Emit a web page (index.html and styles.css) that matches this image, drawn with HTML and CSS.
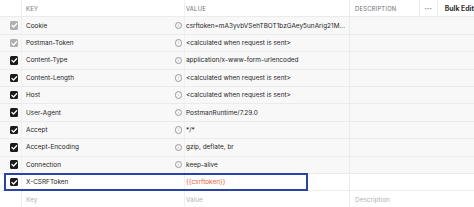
FILE: index.html
```html
<!DOCTYPE html>
<html>
<head>
<meta charset="utf-8">
<link rel="stylesheet" href="styles.css">
</head>
<body>
<div class="table">
  <div class="row head">
    <div class="cell check"></div>
    <div class="cell key">KEY</div>
    <div class="cell value">VALUE</div>
    <div class="cell desc">
      <span class="desc-label">DESCRIPTION</span>
      <span class="dots">•••</span>
      <span class="bulk">Bulk Edit</span>
    </div>
  </div>

  <div class="row grey">
    <div class="cell check"><span class="box off"><svg viewBox="0 0 10 10"><path d="M2.3 5.2 L4.2 7 L7.8 3.2" /></svg></span></div>
    <div class="cell key">Cookie<span class="info">i</span></div>
    <div class="cell value">csrftoken=mA3yvbVSehTBOT1bzGAey5unArig21M...</div>
    <div class="cell desc"></div>
  </div>
  <div class="row grey">
    <div class="cell check"><span class="box off"><svg viewBox="0 0 10 10"><path d="M2.3 5.2 L4.2 7 L7.8 3.2" /></svg></span></div>
    <div class="cell key">Postman-Token<span class="info">i</span></div>
    <div class="cell value">&lt;calculated when request is sent&gt;</div>
    <div class="cell desc"></div>
  </div>
  <div class="row grey">
    <div class="cell check"><span class="box"><svg viewBox="0 0 10 10"><path d="M2.3 5.2 L4.2 7 L7.8 3.2" /></svg></span></div>
    <div class="cell key">Content-Type<span class="info">i</span></div>
    <div class="cell value">application/x-www-form-urlencoded</div>
    <div class="cell desc"></div>
  </div>
  <div class="row grey">
    <div class="cell check"><span class="box"><svg viewBox="0 0 10 10"><path d="M2.3 5.2 L4.2 7 L7.8 3.2" /></svg></span></div>
    <div class="cell key">Content-Length<span class="info">i</span></div>
    <div class="cell value">&lt;calculated when request is sent&gt;</div>
    <div class="cell desc"></div>
  </div>
  <div class="row grey">
    <div class="cell check"><span class="box"><svg viewBox="0 0 10 10"><path d="M2.3 5.2 L4.2 7 L7.8 3.2" /></svg></span></div>
    <div class="cell key">Host<span class="info">i</span></div>
    <div class="cell value">&lt;calculated when request is sent&gt;</div>
    <div class="cell desc"></div>
  </div>
  <div class="row grey">
    <div class="cell check"><span class="box"><svg viewBox="0 0 10 10"><path d="M2.3 5.2 L4.2 7 L7.8 3.2" /></svg></span></div>
    <div class="cell key">User-Agent<span class="info">i</span></div>
    <div class="cell value">PostmanRuntime/7.29.0</div>
    <div class="cell desc"></div>
  </div>
  <div class="row grey">
    <div class="cell check"><span class="box"><svg viewBox="0 0 10 10"><path d="M2.3 5.2 L4.2 7 L7.8 3.2" /></svg></span></div>
    <div class="cell key">Accept<span class="info">i</span></div>
    <div class="cell value">*/*</div>
    <div class="cell desc"></div>
  </div>
  <div class="row grey">
    <div class="cell check"><span class="box"><svg viewBox="0 0 10 10"><path d="M2.3 5.2 L4.2 7 L7.8 3.2" /></svg></span></div>
    <div class="cell key">Accept-Encoding<span class="info">i</span></div>
    <div class="cell value">gzip, deflate, br</div>
    <div class="cell desc"></div>
  </div>
  <div class="row grey">
    <div class="cell check"><span class="box"><svg viewBox="0 0 10 10"><path d="M2.3 5.2 L4.2 7 L7.8 3.2" /></svg></span></div>
    <div class="cell key">Connection<span class="info">i</span></div>
    <div class="cell value">keep-alive</div>
    <div class="cell desc"></div>
  </div>
  <div class="row selected">
    <div class="cell check"><span class="box"><svg viewBox="0 0 10 10"><path d="M2.3 5.2 L4.2 7 L7.8 3.2" /></svg></span></div>
    <div class="cell key">X-CSRFToken</div>
    <div class="cell value var">{{csrftoken}}</div>
    <div class="cell desc"></div>
    <div class="highlight"></div>
  </div>
  <div class="row empty">
    <div class="cell check"></div>
    <div class="cell key placeholder">Key</div>
    <div class="cell value placeholder">Value</div>
    <div class="cell desc placeholder">Description</div>
  </div>
</div>
</body>
</html>
```

FILE: styles.css
```css
html, body {
  margin: 0;
  padding: 0;
  background: #ffffff;
}

body {
  font-family: Inter, "Noto Sans", sans-serif;
  font-size: 6.45px;
  color: #262626;
  width: 474px;
  height: 207px;
  overflow: hidden;
}

.table {
  display: flex;
  flex-direction: column;
}

.row {
  position: relative;
  display: grid;
  grid-template-columns: 22px 163px 165px 1fr;
  height: 17.4px;
  box-sizing: border-box;
  border-bottom: 1px solid #ebebeb;
  background: #ffffff;
}

.row.grey {
  background: #f8f8f8;
}

.row.empty {
  border-bottom: none;
}

.cell {
  display: flex;
  align-items: center;
  box-sizing: border-box;
  border-right: 1px solid #f0f0f0;
  white-space: nowrap;
  overflow: hidden;
}

.cell.desc {
  border-right: none;
}

.row .cell.value {
  border-right: 1px solid #ebebeb;
}

.head .cell {
  color: #6e6e6e;
  font-size: 5.8px;
  letter-spacing: 0.25px;
}

.key {
  padding-left: 4px;
  justify-content: space-between;
  padding-right: 0;
}

.value {
  padding-left: 1px;
}

.desc {
  padding-left: 5px;
}

.head .desc {
  padding-left: 0;
}

.desc-label {
  width: 70px;
  padding-left: 5px;
  box-sizing: border-box;
  align-self: stretch;
  display: flex;
  align-items: center;
  border-right: 1px solid #ededed;
}

.dots {
  width: 17px;
  font-size: 4.2px;
  letter-spacing: 0.1px;
  color: #8a8a8a;
  align-self: stretch;
  display: flex;
  align-items: center;
  justify-content: center;
  border-right: 1px solid #ededed;
}

.head .bulk {
  padding-left: 7px;
  font-weight: 700;
  color: #303030;
  font-size: 6.9px;
  letter-spacing: 0;
}

.check {
  justify-content: flex-start;
  padding-left: 9.5px;
}

.box {
  width: 8.5px;
  height: 8.5px;
  border-radius: 1.5px;
  background: #1c1c1c;
  display: flex;
  align-items: center;
  justify-content: center;
  flex: none;
}

.box.off {
  background: #b0b0b0;
}

.box svg {
  width: 8.5px;
  height: 8.5px;
}

.box path {
  fill: none;
  stroke: #ffffff;
  stroke-width: 1.5;
  stroke-linecap: round;
  stroke-linejoin: round;
}

.info {
  width: 5.5px;
  height: 5.5px;
  border: 0.7px solid #999999;
  border-radius: 50%;
  font-size: 4.2px;
  line-height: 5.5px;
  text-align: center;
  color: #999999;
  font-family: "DejaVu Sans", sans-serif;
  flex: none;
  margin-right: 2px;
}

.var {
  color: #e0643c;
}

.placeholder {
  color: #b3b3b3;
}

.highlight {
  position: absolute;
  left: 4px;
  top: -1px;
  width: 304px;
  height: 18.5px;
  box-sizing: border-box;
  border: 2px solid #2a43a8;
  pointer-events: none;
}
```
